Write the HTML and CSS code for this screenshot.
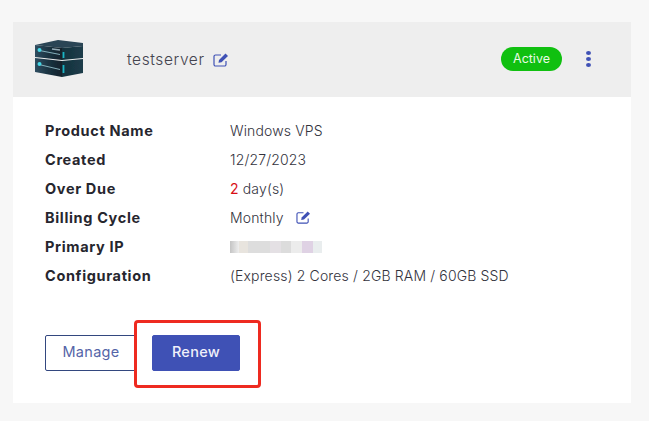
FILE: index.html
```html
<!DOCTYPE html>
<html lang="en">
<head>
<meta charset="utf-8">
<title>testserver</title>
<link rel="stylesheet" href="styles.css">
</head>
<body>
<section class="card">
  <header class="card-head">
    <svg class="server" viewBox="0 0 50 40" aria-hidden="true">
      <defs>
        <linearGradient id="face" x1="0" y1="0" x2="1" y2="0">
          <stop offset="0" stop-color="#2f4e61"/><stop offset="0.5" stop-color="#1b3341"/><stop offset="1" stop-color="#12222b"/>
        </linearGradient>
        <linearGradient id="side" x1="0" y1="0" x2="1" y2="0">
          <stop offset="0" stop-color="#12323d"/><stop offset="1" stop-color="#1f3c4a"/>
        </linearGradient>
        <filter id="soft" x="-5%" y="-5%" width="110%" height="110%"><feGaussianBlur stdDeviation="0.4"/></filter>
      </defs>
      <g filter="url(#soft)">
        <path d="M1 6 L24 1 L49 4 L49 7 L28 9 L1 6Z" fill="#2a4454"/>
        <path d="M1 6 L28 9 L28 21 L1 18Z" fill="url(#face)"/>
        <path d="M28 9 L49 7 L49 19 L28 21Z" fill="url(#side)"/>
        <path d="M1 19 L28 22 L28 38 L1 33Z" fill="url(#face)"/>
        <path d="M28 22 L49 20 L49 34 L28 38Z" fill="url(#side)"/>
        <path d="M7 11.800 L26 15.500" stroke="#8fbcc7" stroke-width="0.900"/>
        <path d="M7 26 L26 30.500" stroke="#8fbcc7" stroke-width="0.900"/>
        <circle cx="5.500" cy="11" r="2" fill="#45d8e8"/>
        <circle cx="5.500" cy="25" r="2" fill="#45d8e8"/>
        <path d="M29.500 13 V19 M29.500 26 V34" stroke="#1fb4c4" stroke-width="1.800"/>
        <path d="M18 10 L26 11" stroke="#93aab5" stroke-width="1.500"/>
      </g>
    </svg>
    <span class="server-name">testserver</span>
    <svg class="edit edit-lg" viewBox="0 0 16 15" aria-hidden="true">
      <path d="M13 9 V12.500 A1.500 1.500 0 0 1 11.500 14 H2.500 A1.500 1.500 0 0 1 1 12.500 V4.500 A1.500 1.500 0 0 1 2.500 3 H8" fill="none" stroke="currentColor" stroke-width="1.200"/>
      <path d="M5.500 10.800 L6 8 L12.500 1.500 L15 4 L8.500 10.300Z" fill="currentColor"/>
    </svg>
    <span class="badge">Active</span>
    <span class="kebab" aria-hidden="true"><i></i><i></i><i></i></span>
  </header>
  <div class="card-body">
    <dl class="facts">
      <div class="fact"><dt>Product Name</dt><dd>Windows VPS</dd></div>
      <div class="fact"><dt>Created</dt><dd>12/27/2023</dd></div>
      <div class="fact"><dt>Over Due</dt><dd><span class="late">2</span> day(s)</dd></div>
      <div class="fact"><dt>Billing Cycle</dt><dd>Monthly
        <svg class="edit edit-sm" viewBox="0 0 16 15" aria-hidden="true">
          <path d="M13 9 V12.500 A1.500 1.500 0 0 1 11.500 14 H2.500 A1.500 1.500 0 0 1 1 12.500 V4.500 A1.500 1.500 0 0 1 2.500 3 H8" fill="none" stroke="currentColor" stroke-width="1.200"/>
          <path d="M5.500 10.800 L6 8 L12.500 1.500 L15 4 L8.500 10.300Z" fill="currentColor"/>
        </svg></dd></div>
      <div class="fact"><dt>Primary IP</dt><dd><span class="blur"><i class="b1"></i><i class="b2"></i><i class="b3"></i><i class="b4"></i><i class="b5"></i><i class="b6"></i><i class="b7"></i><i class="b8"></i></span></dd></div>
      <div class="fact"><dt>Configuration</dt><dd>(Express) 2 Cores / 2GB RAM / 60GB SSD</dd></div>
    </dl>
    <div class="actions">
      <a class="btn btn-outline">Manage</a>
      <a class="btn btn-solid">Renew</a>
      <span class="callout"></span>
    </div>
  </div>
</section>
</body>
</html>
```
FILE: styles.css
```css
* { box-sizing: border-box; }
html, body { height: 100%; }
body {
  margin: 0;
  padding: 22px 18px 18px 13px;
  background: #f7f7f7;
  font-family: "Inter", "Liberation Sans", sans-serif;
  color: #44444f;
  overflow: hidden;
}
.card { background: #fff; height: 381px; }
.card-head {
  height: 75px;
  background: #eeeeee;
  display: flex;
  align-items: center;
  padding: 0 40px 0 21px;
}
.server { width: 50px; height: 40px; margin-top: -1px; }
.server-name { margin-left: 43px; font-size: 15.500px; font-weight: 300; letter-spacing: 0.6px; color: #44444f; }
.edit { color: #3f51b5; }
.edit-lg { width: 16px; height: 15px; margin-left: 8px; }
.edit-sm { width: 15px; height: 14px; margin-left: 8px; vertical-align: -1px; }
.badge {
  margin-left: auto;
  margin-top: -2px;
  width: 61px;
  height: 24px;
  border-radius: 12px;
  background: #10c010;
  color: #eafbe6;
  font-size: 12.500px;
  line-height: 23px;
  text-align: center;
}
.kebab { margin-left: 24px; margin-top: -2px; width: 5px; display: flex; flex-direction: column; gap: 2px; }
.kebab i { display: block; width: 5px; height: 4px; border-radius: 50%; background: #3f51b5; }
.card-body { padding: 19px 32px 0; }
.facts { margin: 0; }
.fact { display: flex; height: 29px; align-items: center; font-size: 14px; }
.fact dt { width: 185px; font-size: 14.500px; font-weight: 700; color: #26262e; letter-spacing: 0.65px; }
.fact dd { margin: 0; font-weight: 300; letter-spacing: 0.15px; color: #33333d; }
.late { color: #d80f16; font-weight: 400; }
.blur { display: flex; height: 12px; width: 92px; filter: blur(0.6px); }
.blur i { display: block; height: 100%; }
.blur .b1 { width: 10px; background: linear-gradient(90deg, #c4c4c4, #eeeeee); }
.blur .b2 { width: 10px; background: #e8e4de; }
.blur .b3 { width: 24px; background: #dddddd; }
.blur .b4 { width: 12px; background: #e4e0e4; }
.blur .b5 { width: 12px; background: #dcdcdc; }
.blur .b6 { width: 12px; background: #ececec; }
.blur .b7 { width: 12px; background: #dfd2e4; }
.blur .b8 { width: 10px; background: #e9edee; }
.actions { position: relative; display: flex; margin-top: 45px; }
.btn {
  height: 36px;
  border-radius: 2px;
  font-size: 14.500px;
  font-weight: 500;
  line-height: 32px;
  text-align: center;
  letter-spacing: 0.3px;
}
.btn-outline { width: 92px; border: 1px solid #33477f; color: #5565a8; font-weight: 400; }
.btn-solid { width: 88px; margin-left: 15px; border: 1px solid #3f51b5; background: #3f51b5; color: #f0f0fa; }
.callout {
  position: absolute;
  left: 89px;
  top: -15px;
  width: 127px;
  height: 68px;
  border: 3px solid #ee2a20;
  border-radius: 4px;
}
```
